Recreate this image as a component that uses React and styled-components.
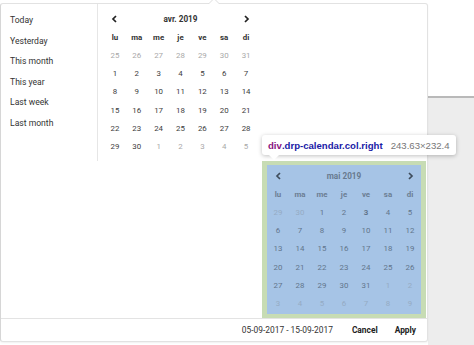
import styled, { createGlobalStyle } from "styled-components";

const GlobalStyle = createGlobalStyle`
  body {
    margin: 0;
    background: #fff;
    font-family: Roboto, "Liberation Sans", Arial, sans-serif;
  }
`;

const ranges = ["Today", "Yesterday", "This month", "This year", "Last week", "Last month"];
const weekdays = ["lu", "ma", "me", "je", "ve", "sa", "di"];

// [day, isOffMonth]
const build = (prevStart, prevEnd, days, nextCount) => {
  const out = [];
  for (let d = prevStart; d <= prevEnd; d++) out.push([d, true]);
  for (let d = 1; d <= days; d++) out.push([d, false]);
  for (let d = 1; d <= nextCount; d++) out.push([d, true]);
  return out;
};

const april = build(25, 31, 30, 5);
const may = build(29, 30, 31, 9);

const Chevron = ({ dir }) => (
  <svg width="7" height="8" viewBox="0 0 7 8">
    <path
      d={dir === "left" ? "M5 1 L2 4 L5 7" : "M2 1 L5 4 L2 7"}
      fill="none"
      stroke="currentColor"
      strokeWidth="1.7"
    />
  </svg>
);

const Calendar = ({ title, days, inspected, boldDay }) => (
  <CalendarBox $inspected={inspected}>
    {inspected && (
      <Tooltip>
        <TagName>div</TagName>
        <ClassName>.drp-calendar.col.right</ClassName>
        <Size>243.63×232.4</Size>
      </Tooltip>
    )}
    <CalendarGrid $inspected={inspected}>
      <Arrow $inspected={inspected}>
        <Chevron dir="left" />
      </Arrow>
      <MonthTitle $inspected={inspected}>{title}</MonthTitle>
      <Arrow $inspected={inspected}>
        <Chevron dir="right" />
      </Arrow>
      {weekdays.map((w) => (
        <Weekday key={w} $inspected={inspected}>
          {w}
        </Weekday>
      ))}
      {days.map(([d, off], i) => (
        <Day
          key={i}
          $off={off}
          $inspected={inspected}
          $bold={!off && d === boldDay}
        >
          {d}
        </Day>
      ))}
    </CalendarGrid>
  </CalendarBox>
);

const App = () => {
  return (
    <Page>
      <GlobalStyle />
      <Picker>
        <PickerBody>
          <Ranges>
            {ranges.map((r) => (
              <RangeItem key={r}>{r}</RangeItem>
            ))}
          </Ranges>
          <LeftSlot>
            <Calendar title="avr. 2019" days={april} />
          </LeftSlot>
          <RightSlot>
            <Calendar title="mai 2019" days={may} inspected boldDay={3} />
          </RightSlot>
        </PickerBody>
        <Footer>
          <SelectedRange>05-09-2017 - 15-09-2017</SelectedRange>
          <FooterButton>Cancel</FooterButton>
          <FooterButton>Apply</FooterButton>
        </Footer>
      </Picker>
      <Backdrop>
        <BackdropTop />
        <BackdropPanel />
      </Backdrop>
    </Page>
  );
};

export default App;

const Page = styled.div`
  display: flex;
  width: 474px;
  height: 345px;
  overflow: hidden;
`;

const Picker = styled.div`
  position: relative;
  z-index: 2;
  flex: 0 0 426px;
  align-self: flex-start;
  margin-top: 3px;
  background: #fff;
  border: 1px solid #e2e2e2;
  border-left-color: #d6d6d6;
  border-radius: 3px;
  box-shadow: 0 1px 2px rgba(0, 0, 0, 0.06);
  display: flex;
  flex-direction: column;

  &::before,
  &::after {
    content: "";
    position: absolute;
    left: 207px;
    width: 0;
    height: 0;
    border-left: 6px solid transparent;
    border-right: 6px solid transparent;
  }
  &::before {
    top: -6px;
    border-bottom: 6px solid #ddd;
  }
  &::after {
    top: -5px;
    left: 208px;
    border-left-width: 5px;
    border-right-width: 5px;
    border-bottom: 5px solid #fff;
  }
`;

const PickerBody = styled.div`
  display: grid;
  grid-template-columns: 96px 165px 164px;
  grid-template-rows: 157px 157px;
`;

const Ranges = styled.ul`
  grid-row: 1 / span 2;
  list-style: none;
  margin: 0;
  padding: 6px 0 0 9px;
`;

const RangeItem = styled.li`
  height: 20.6px;
  line-height: 20.6px;
  font-size: 8.6px;
  color: #333;
`;

const LeftSlot = styled.div`
  grid-row: 1;
  grid-column: 2;
  border-left: 1px solid #e6e6e6;
`;

const RightSlot = styled.div`
  grid-row: 2;
  grid-column: 3;
  position: relative;
`;

const CalendarBox = styled.div`
  position: relative;
  height: 100%;
  box-sizing: border-box;
  padding: ${(p) => (p.$inspected ? "4px 5px 4px 5px" : "6px 5px 0 6px")};
  background: ${(p) => (p.$inspected ? "#c7dcb4" : "transparent")};
`;

const CalendarGrid = styled.div`
  display: grid;
  grid-template-columns: repeat(7, 1fr);
  grid-auto-rows: 18.2px;
  align-items: center;
  justify-items: center;
  height: 100%;
  box-sizing: border-box;
  padding-top: ${(p) => (p.$inspected ? "2px" : "0")};
  background: ${(p) => (p.$inspected ? "#a6c4e6" : "transparent")};
  font-size: 7.9px;
`;

const Arrow = styled.div`
  display: flex;
  color: ${(p) => (p.$inspected ? "#3f4d5c" : "#222")};
`;

const MonthTitle = styled.div`
  grid-column: span 5;
  font-size: 8.2px;
  font-weight: 700;
  color: ${(p) => (p.$inspected ? "#687a8f" : "#333")};
`;

const Weekday = styled.div`
  font-weight: 700;
  color: ${(p) => (p.$inspected ? "#6c7e93" : "#333")};
`;

const Day = styled.div`
  font-weight: ${(p) => (p.$bold ? 700 : 400)};
  color: ${(p) =>
    p.$inspected
      ? p.$off
        ? "#95abc4"
        : "#62758b"
      : p.$off
      ? "#a8a8a8"
      : "#3c3c3c"};
`;

const Tooltip = styled.div`
  position: absolute;
  z-index: 5;
  top: -26px;
  left: 0;
  height: 20px;
  padding: 0 6px;
  display: flex;
  align-items: center;
  white-space: nowrap;
  background: #fff;
  border-radius: 3px;
  box-shadow: 0 1px 4px rgba(0, 0, 0, 0.25);
  font-family: "Liberation Sans", Arial, sans-serif;
  font-size: 9.6px;

  &::after {
    content: "";
    position: absolute;
    left: 7px;
    bottom: -5px;
    border-left: 5px solid transparent;
    border-right: 5px solid transparent;
    border-top: 5px solid #fff;
  }
`;

const TagName = styled.span`
  color: #881280;
  font-weight: 700;
`;

const ClassName = styled.span`
  color: #1a1aa6;
  font-weight: 700;
`;

const Size = styled.span`
  margin-left: 8px;
  color: #777;
`;

const Footer = styled.div`
  height: 22px;
  border-top: 1px solid #e3e3e3;
  display: flex;
  align-items: center;
  justify-content: flex-end;
  padding-right: 11px;
  font-size: 8.4px;
  color: #333;
`;

const SelectedRange = styled.span`
  margin-right: 19px;
`;

const FooterButton = styled.button`
  border: none;
  background: none;
  padding: 0;
  margin-left: 17px;
  font-family: inherit;
  font-size: 8.4px;
  font-weight: 700;
  color: #222;

  &:first-of-type {
    margin-left: 0;
  }
`;

const Backdrop = styled.div`
  flex: 1;
  display: flex;
  flex-direction: column;
`;

const BackdropTop = styled.div`
  height: 96px;
  background: #fff;
`;

const BackdropPanel = styled.div`
  flex: 1;
  background: #ededed;
  border-top: 2px solid #b9b9b9;
`;
